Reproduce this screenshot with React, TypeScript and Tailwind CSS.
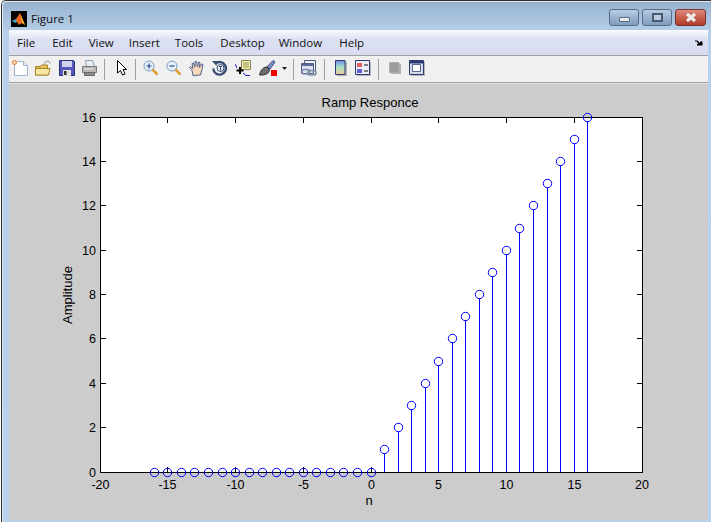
import type { ReactNode } from "react";

const menus = ["File", "Edit", "View", "Insert", "Tools", "Desktop", "Window", "Help"];
const menuGaps = ["ml-[8px]", "ml-[17px]", "ml-[16px]", "ml-[15px]", "ml-[15px]", "ml-[17px]", "ml-[14px]", "ml-[17px]"];

const xs = Array.from({ length: 33 }, (_, i) => i - 16);
const px = (n: number) => Math.floor(371 + n * 13.54) + 0.5;
const py = (v: number) => (v === 0 ? 472.5 : Math.round(472.3 - v * 22.16) - 0.5);

function Icon({ w = 16, className, children }: { w?: number; className: string; children: ReactNode }) {
  return (
    <svg width={w} height="16" viewBox={`0 0 ${w} 16`} className={`mb-[2px] shrink-0 ${className}`}>
      {children}
    </svg>
  );
}

function Sep({ className }: { className: string }) {
  return <div className={`h-[21px] w-px shrink-0 bg-[#a0a0a0] ${className}`} />;
}

function Toolbar() {
  return (
    <div className="flex h-[28px] shrink-0 items-center border-y border-[#a0a0a0] bg-[#f0f0f0]">
      {/* new */}
      <Icon w={17} className="ml-[3px]">
        <path d="M2.500 1.500h9l4 4v10h-13z" fill="#fff" stroke="#9db4d4" />
        <path d="M11.500 1.500v4h4" fill="#dfe8f4" stroke="#9db4d4" />
        <circle cx="2.500" cy="2.500" r="2" fill="#fbd9b0" stroke="#e8742a" />
      </Icon>
      {/* open */}
      <Icon className="ml-[6px]">
        <path d="M.5 6.500h5l1-1.500h6v10h-12z" fill="#e6c35c" stroke="#a58428" />
        <path d="M.5 8.500h14.500l-1.500 6.500h-13z" fill="#f8e7a2" stroke="#a58428" />
        <path d="M9 4.500c1-3 3-4 5-3l1 2" fill="none" stroke="#6f8aa8" />
      </Icon>
      {/* save */}
      <Icon className="ml-[8px]">
        <path d="M.5.500h14l1 1v14h-15z" fill="#5558b8" stroke="#2c2e78" />
        <path d="M3 1h10v6H3z" fill="#cfd2ee" />
        <path d="M4 10h8v6H4z" fill="#e0e0e0" />
        <path d="M5 11h2.500v4H5z" fill="#333" />
      </Icon>
      {/* print */}
      <Icon className="ml-[7px]">
        <path d="M3.500.500h7l2 6h-8z" fill="#e6eef6" stroke="#92a0b0" />
        <path d="M.5 6.500h14v6h-14z" fill="#b8b8b8" stroke="#767676" />
        <path d="M2.500 12.500h10v3h-10z" fill="#8c8c8c" stroke="#6a6a6a" />
        <path d="M2 9h9" stroke="#ececec" />
      </Icon>
      <Sep className="ml-[6px]" />
      {/* pointer */}
      <Icon w={10} className="ml-[12px]">
        <path d="M.5.500v12.500l3-2.500 2 4.500 2.500-1-2-4.500h3.500z" fill="#fff" stroke="#000" />
      </Icon>
      <Sep className="ml-[8px]" />
      {/* zoom in */}
      <Icon className="ml-[7px]">
        <circle cx="6" cy="6" r="5" fill="#e6f0fa" stroke="#7e9cbc" />
        <path d="M3.500 6h5M6 3.500v5" stroke="#27478f" strokeWidth="1.200" />
        <path d="M9.500 9.500l5 5" stroke="#dc9c34" strokeWidth="2.500" />
      </Icon>
      {/* zoom out */}
      <Icon className="ml-[7px]">
        <circle cx="6" cy="6" r="5" fill="#e6f0fa" stroke="#7e9cbc" />
        <path d="M3.500 6h5" stroke="#27478f" strokeWidth="1.200" />
        <path d="M9.500 9.500l5 5" stroke="#dc9c34" strokeWidth="2.500" />
      </Icon>
      {/* pan */}
      <Icon className="ml-[7px]">
        <path d="M4 15.500l-1-5-2.500-3 1-1 2.500 2-1-5 1.500-.5 1.500 4v-5.500h1.500l1 5.500 1-5 1.500.5-.5 5 2-3.500 1.500.5-1 5-1.500 5.500z" fill="#f9d9bb" stroke="#4f618f" />
      </Icon>
      {/* rotate */}
      <Icon className="ml-[7px]">
        <path d="M3.500 3.500a6.300 6.300 0 1 1-2.200 5" fill="none" stroke="#3a4c72" strokeWidth="2.400" />
        <path d="M0 1h5.500l-1 5z" fill="#3a4c72" />
        <circle cx="8.500" cy="8" r="3.500" fill="#e8ecf4" stroke="#3a4c72" />
        <path d="M7 6.500h3M8.500 6.500v4" stroke="#3a4c72" />
      </Icon>
      {/* data cursor */}
      <Icon className="ml-[7px]">
        <path d="M6.500.500h9v9h-9z" fill="#f8f0ac" stroke="#85855a" />
        <path d="M8 3h6M8 5h6M8 7h6" stroke="#8f8f60" />
        <path d="M5 7v7M1.500 10.500h7" stroke="#000" strokeWidth="2" />
        <path d="M0 4l2 4M8 13l3 2.500h4" stroke="#1414d8" fill="none" />
      </Icon>
      {/* brush */}
      <Icon w={18} className="ml-[8px]">
        <path d="M8 7l6-6.500 2 1.500-5 7z" fill="#7f90c4" stroke="#3f4870" />
        <path d="M.5 15c1-4 3-8 7.500-8l2.500 2.500c0 3.500-4 6-10 5.500z" fill="#6e6e6e" stroke="#2e2e2e" />
        <path d="M12 10h6v6h-6z" fill="#f00000" />
      </Icon>
      <Icon w={5} className="ml-[5px]">
        <path d="M0 7h5l-2.500 3z" fill="#222" />
      </Icon>
      <Sep className="ml-[6px]" />
      {/* link */}
      <Icon className="ml-[7px]">
        <path d="M3.500.500h11v10h-11z" fill="#eef1f7" stroke="#4c5c82" />
        <path d="M.5 3.500h12v10h-12z" fill="#dfe5ef" stroke="#4c5c82" />
        <path d="M1 4h11v2H1z" fill="#5c6c9a" />
        <rect x="1" y="9.500" width="7.500" height="4.500" rx="2.200" fill="none" stroke="#7a8ba6" strokeWidth="1.600" />
        <rect x="7" y="10.500" width="8" height="4.500" rx="2.200" fill="none" stroke="#7a8ba6" strokeWidth="1.600" />
      </Icon>
      <Sep className="ml-[7px]" />
      {/* colorbar */}
      <Icon w={12} className="ml-[10px]">
        <defs>
          <linearGradient id="cb" x1="0" y1="0" x2="0" y2="1">
            <stop offset="0" stopColor="#6d8fe2" />
            <stop offset=".5" stopColor="#a9e2c4" />
            <stop offset="1" stopColor="#f2c994" />
          </linearGradient>
        </defs>
        <path d="M2 2h10v14H2z" fill="#b4b4b4" />
        <path d="M.5.500h9.500v14h-9.500z" fill="url(#cb)" stroke="#2b3a72" />
      </Icon>
      {/* legend */}
      <Icon className="ml-[8px]">
        <path d="M2 2h14v14H2z" fill="#b4b4b4" />
        <path d="M.5.500h14v14h-14z" fill="#eceff6" stroke="#2b3a72" />
        <path d="M2 3h5v4H2z" fill="#e25f5f" />
        <path d="M2 9h5v4H2z" fill="#6060d2" />
        <path d="M9 5h4M9 11h4" stroke="#111" strokeWidth="1.200" />
      </Icon>
      <Sep className="ml-[7px]" />
      {/* hide tools */}
      <Icon w={12} className="ml-[10px]">
        <path d="M2 4h10v10H2z" fill="#b0b0b0" />
        <path d="M.5 2.500h9.500v10h-9.500z" fill="#9c9c9c" stroke="#adadad" />
      </Icon>
      {/* show tools */}
      <Icon className="ml-[8px]">
        <path d="M2 2h14v14H2z" fill="#b4b4b4" />
        <path d="M.5.500h14v14h-14z" fill="#d6dae6" stroke="#2b3a72" />
        <path d="M1 1h13v2.500H1z" fill="#2b3a72" />
        <path d="M3.500 4.500h8v7h-8z" fill="#fff" stroke="#55658a" />
      </Icon>
    </div>
  );
}

function Plot() {
  const xt = [-20, -15, -10, -5, 0, 5, 10, 15, 20];
  const yt = [0, 2, 4, 6, 8, 10, 12, 14, 16];
  return (
    <svg width="699" height="435" viewBox="0 0 699 435" className="block" fontFamily="'Liberation Sans', Arial, sans-serif" fontSize="12.5" fill="#000">
      <g transform="translate(-9,-84)">
        <rect x="100.500" y="117.500" width="542" height="355" fill="#fff" stroke="#000" />
        {xt.map((t) => (
          <g key={t}>
            {Math.abs(t) < 20 && <path d={`M${px(t)} 472v-5M${px(t)} 118v5`} stroke="#000" />}
            <text x={t === 20 ? 642 : px(t)} y="488.500" textAnchor="middle">{t}</text>
          </g>
        ))}
        {yt.map((t) => (
          <g key={t}>
            {t > 0 && t < 16 && <path d={`M101 ${py(t)}h5M642 ${py(t)}h-5`} stroke="#000" />}
            <text x="96" y={py(t) + 4.5} textAnchor="end">{t}</text>
          </g>
        ))}
        <text x="370" y="107" textAnchor="middle" fontSize="13">Ramp Responce</text>
        <text x="369" y="505" textAnchor="middle" fontSize="13">n</text>
        <text x="72" y="295" textAnchor="middle" fontSize="13" transform="rotate(-90 72 295)">Amplitude</text>
        {xs.map((n) => {
          const v = Math.max(n, 0);
          return (
            <g key={n}>
              {v > 0 && <path d={`M${px(n)} 472V${py(v) + 4}`} stroke="#0000ff" />}
              <circle cx={px(n)} cy={py(v)} r="4.200" fill="none" stroke="#0000ff" />
            </g>
          );
        })}
      </g>
    </svg>
  );
}

export default function App() {
  return (
    <div className="h-[522px] w-[711px] overflow-hidden bg-white font-['Liberation_Sans',Arial,sans-serif]">
      <div className="ml-px h-[522px] rounded-tl-[5px] border-l border-t border-[#2e2e2e]">
        <div className="flex h-[521px] flex-col rounded-tl-[4px] border-l border-t border-[#dfe8f2] bg-[linear-gradient(#97b3d0,#b7cfe8_30px,#b9d1ea)] pb-[2px] pl-[6px] pr-[3px]">
          <div className="relative flex h-[28px] shrink-0 items-center pl-[2px] pt-[6px]">
            <svg width="16" height="16" viewBox="0 0 16 16" className="shrink-0">
              <rect width="16" height="16" fill="#000" />
              <path d="M1 10l4-2 4-6 5 12-3-2-3 2-3-4z" fill="#e8641a" />
              <path d="M1 10l4-2 1 3-2 1z" fill="#3aa0c0" />
              <path d="M9 2l5 12-3-2z" fill="#f8b030" />
            </svg>
            <span className="ml-[4px] font-['Open_Sans',sans-serif] text-[11.500px] text-[#101010]">Figure 1</span>
            <div className="absolute right-[2px] top-[7px] flex gap-[3px]">
              <div className="flex h-[17px] w-[30px] items-center justify-center rounded-[3px] border border-[#5a6a80] bg-gradient-to-b from-[#b8cde2] via-[#9ab4d0] to-[#7f9ebd]">
                <div className="mt-[3px] h-[5px] w-[11px] rounded-[1px] border border-[#5a6a80] bg-[#e8e8e8]" />
              </div>
              <div className="flex h-[17px] w-[30px] items-center justify-center rounded-[3px] border border-[#5a6a80] bg-gradient-to-b from-[#b8cde2] via-[#9ab4d0] to-[#7f9ebd]">
                <div className="h-[9px] w-[11px] border-2 border-[#4a5a70] bg-[#b8cde2]" />
              </div>
              <div className="flex h-[17px] w-[31px] items-center justify-center rounded-[3px] border border-[#7a3030] bg-gradient-to-b from-[#dd8a7c] via-[#c8604e] to-[#b03a2a]">
                <svg width="14" height="11" viewBox="0 0 14 11">
                  <path d="M3 2l8 7M11 2l-8 7" stroke="#eeeeee" strokeWidth="3" />
                </svg>
              </div>
            </div>
          </div>
          <div className="flex h-[25px] shrink-0 items-center justify-between bg-gradient-to-b from-[#f8fafd] via-[#dbe0f2] via-40% to-[#d8dcef] pr-[5px] font-['Open_Sans',sans-serif] text-[11.500px] text-[#101010]">
            <div className="flex">
              {menus.map((m, i) => (
                <span key={m} className={menuGaps[i]}>{m}</span>
              ))}
            </div>
            <svg width="8" height="6" viewBox="0 0 8 6">
              <path d="M0 .5h2.500L5 3V1.500h2.500V5.500H2V4h1.500L1.500 1.500H0z" fill="#000" />
            </svg>
          </div>
          <Toolbar />
          <div className="flex-1 border-t border-[#e2e2e2] bg-[#cccccc]">
            <Plot />
          </div>
        </div>
      </div>
    </div>
  );
}
